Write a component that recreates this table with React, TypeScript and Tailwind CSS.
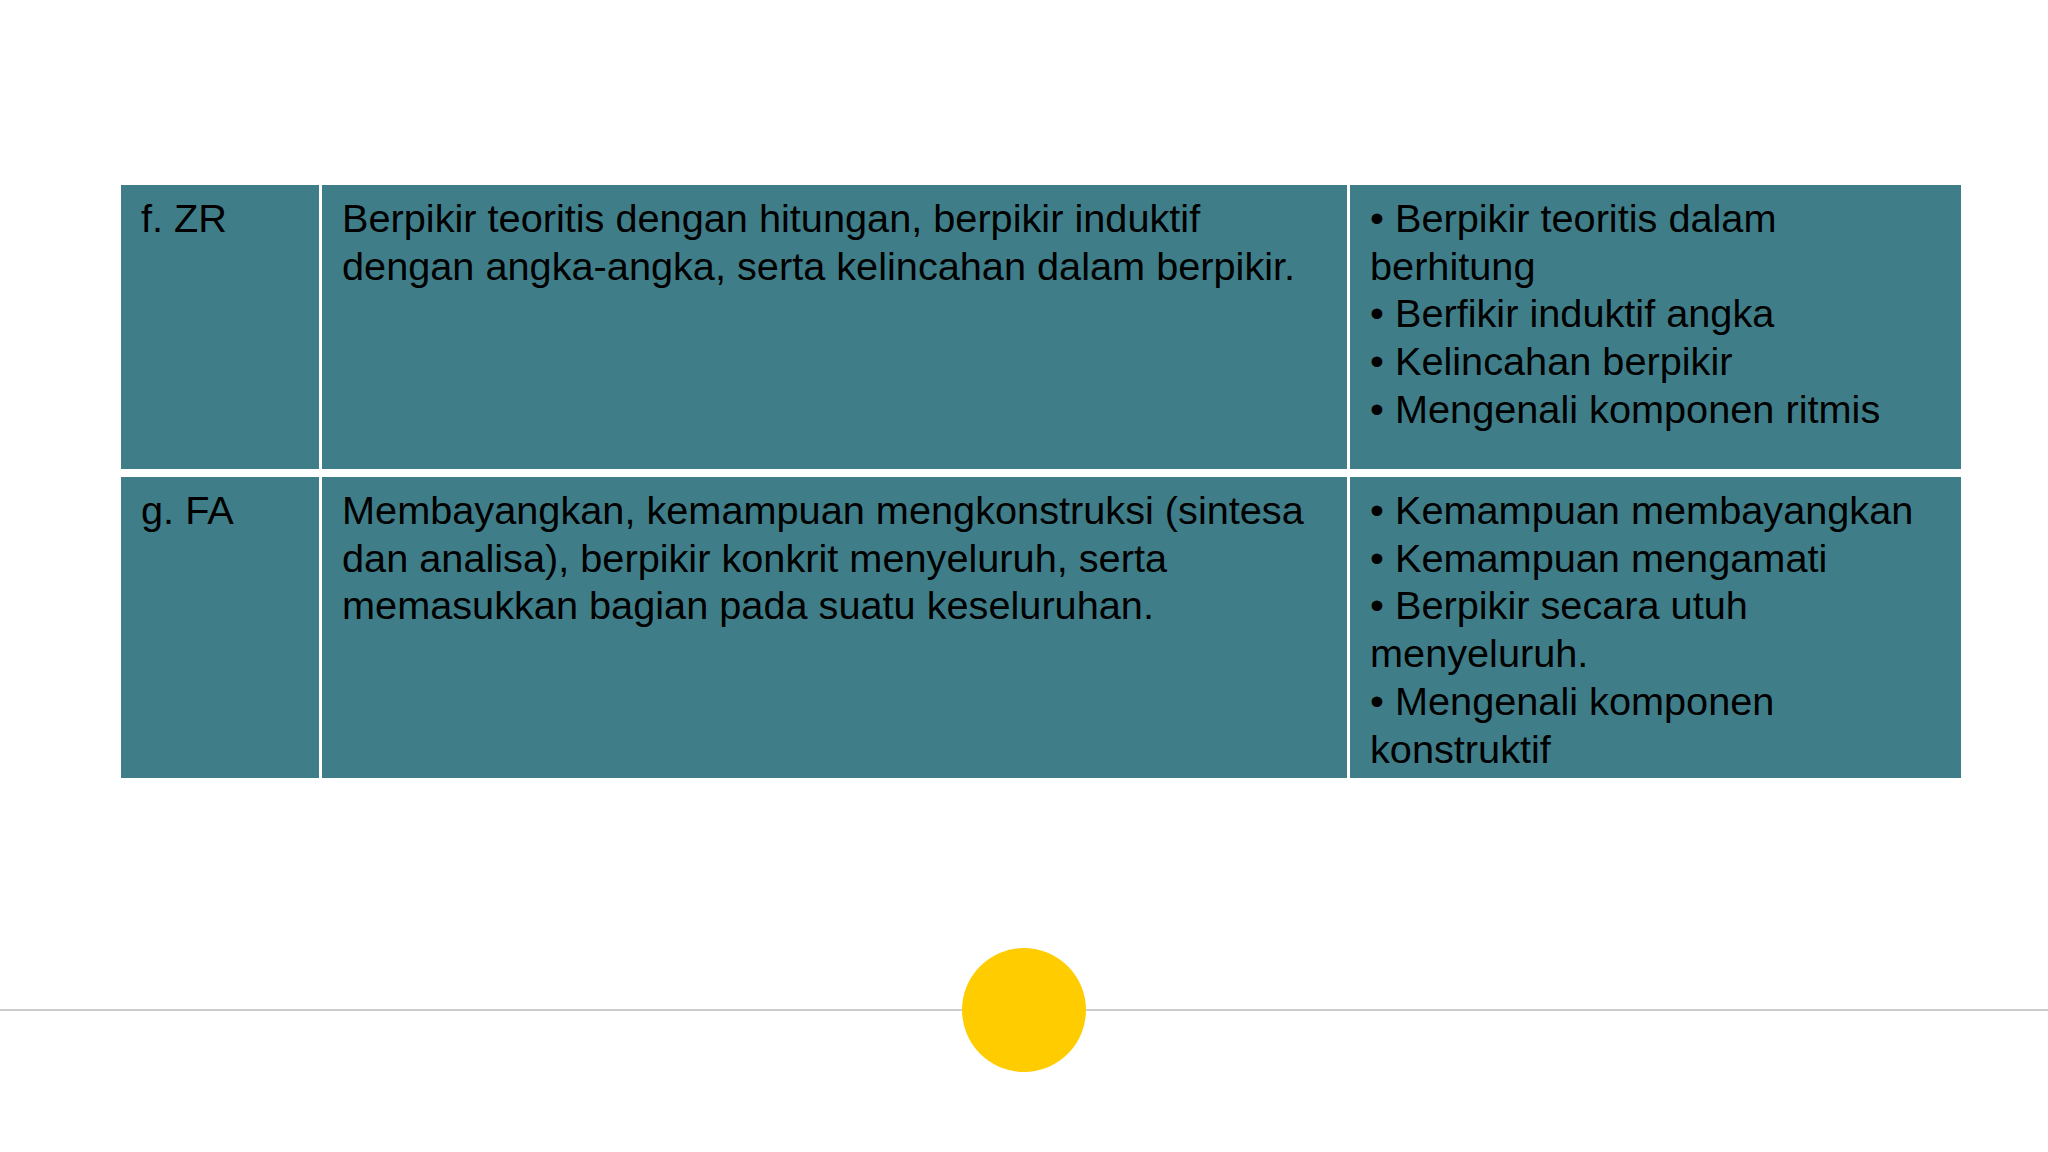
export default function App() {
  const cell = "bg-[#3f7e89] pl-[20px] pt-[10px] text-black";
  const Lines = ({ lines }: { lines: string[] }) => (
    <>
      {lines.map((l, i) => (
        <div key={i} className="whitespace-nowrap">
          {l}
        </div>
      ))}
    </>
  );
  return (
    <div className="w-[2048px] h-[1152px] bg-white overflow-hidden font-['Liberation_Sans',Arial,sans-serif] text-[39.7px] leading-[47.7px]">
      <div className="pt-[185px] pl-[121px] pr-[87px] flex flex-col gap-[8px]">
        <div className="flex gap-[3px] h-[284px]">
          <div className={`${cell} w-[198px]`}>
            <Lines lines={["f. ZR"]} />
          </div>
          <div className={`${cell} w-[1025px]`}>
            <Lines
              lines={[
                "Berpikir teoritis dengan hitungan, berpikir induktif",
                "dengan angka-angka, serta kelincahan dalam berpikir.",
              ]}
            />
          </div>
          <div className={`${cell} flex-1`}>
            <Lines
              lines={[
                "\u2022 Berpikir teoritis dalam",
                "berhitung",
                "\u2022 Berfikir induktif angka",
                "\u2022 Kelincahan berpikir",
                "\u2022 Mengenali komponen ritmis",
              ]}
            />
          </div>
        </div>
        <div className="flex gap-[3px] h-[301px]">
          <div className={`${cell} w-[198px]`}>
            <Lines lines={["g. FA"]} />
          </div>
          <div className={`${cell} w-[1025px]`}>
            <Lines
              lines={[
                "Membayangkan, kemampuan mengkonstruksi (sintesa",
                "dan analisa), berpikir konkrit menyeluruh, serta",
                "memasukkan bagian pada suatu keseluruhan.",
              ]}
            />
          </div>
          <div className={`${cell} flex-1`}>
            <Lines
              lines={[
                "\u2022 Kemampuan membayangkan",
                "\u2022 Kemampuan mengamati",
                "\u2022 Berpikir secara utuh",
                "menyeluruh.",
                "\u2022 Mengenali komponen",
                "konstruktif",
              ]}
            />
          </div>
        </div>
      </div>
      <div className="mt-[170px] flex items-center h-[124px]">
        <div className="flex-1 h-[2px] bg-[#cccccc]" />
        <div className="w-[124px] h-[124px] rounded-full bg-[#ffcc00]" />
        <div className="flex-1 h-[2px] bg-[#cccccc]" />
      </div>
    </div>
  );
}
